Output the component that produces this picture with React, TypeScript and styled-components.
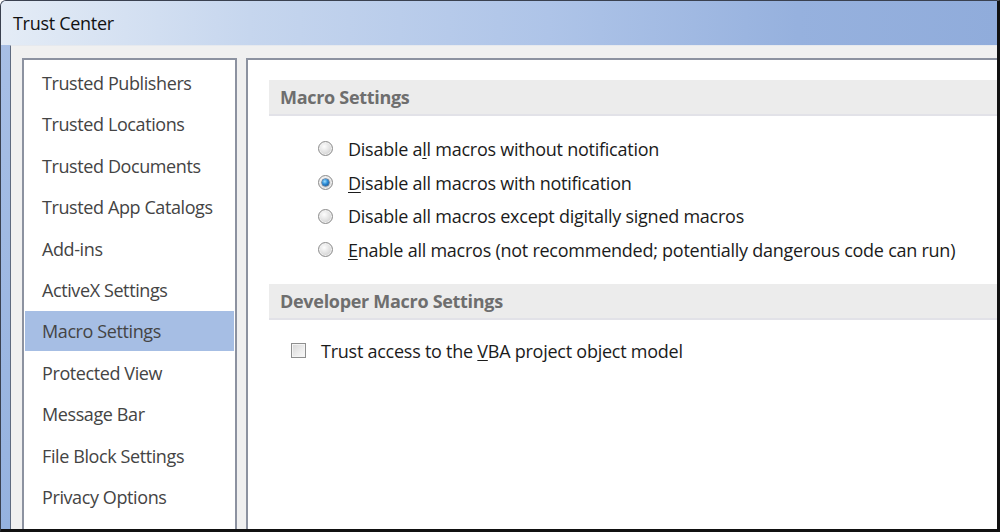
import React from 'react';
import styled, { createGlobalStyle, css } from 'styled-components';

const UI_FONT = '"Open Sans", "Noto Sans", "Liberation Sans", sans-serif';

const GlobalStyle = createGlobalStyle`
  html, body {
    margin: 0;
    padding: 0;
    background: #ffffff;
  }
  body {
    font-family: ${UI_FONT};
  }
`;

const Window = styled.div`
  width: 1000px;
  height: 532px;
  box-sizing: border-box;
  border-top: 1px solid #3a4150;
  border-left: 1px solid #3a4150;
  border-right: 3px solid #111;
  border-bottom: 3px solid #111;
  border-top-left-radius: 6px;
  display: flex;
  flex-direction: column;
  overflow: hidden;
  background: linear-gradient(180deg, #a9c0e6 0%, #95b2df 100%);
`;

const TitleBar = styled.div`
  height: 44px;
  flex: none;
  display: flex;
  align-items: center;
  padding-left: 12px;
  background: linear-gradient(90deg, #e4ecf6 0%, #c6d6ee 25%, #aec4e8 55%, #96b1de 80%, #90acdb 100%);
  font-size: 18px;
  color: #111;
  letter-spacing: -0.3px;
`;

const Body = styled.div`
  flex: 1;
  display: flex;
  min-height: 0;
  padding-left: 9px;
`;

const Client = styled.div`
  flex: 1;
  display: flex;
  gap: 9px;
  padding: 12px 0 0 11px;
  background: #f0f0f0;
  border-left: 1px solid #5f6b80;
  border-top: 1px solid #e6e9ee;
  min-height: 0;
`;

const Panel = styled.div<{ $width?: number }>`
  box-sizing: border-box;
  background: #fff;
  border: 2px solid #8c92a0;
  border-bottom: none;
  ${({ $width }) =>
    $width
      ? css`
          width: ${$width}px;
          flex: none;
        `
      : css`
          flex: 1;
          border-right: none;
        `}
`;

const NavList = styled.ul`
  list-style: none;
  margin: 0;
  padding: 3px 0 0;
`;

const NavItem = styled.li<{ $selected?: boolean }>`
  height: 40px;
  margin: 0 1px 1.4px;
  display: flex;
  align-items: center;
  padding-left: 17px;
  font-size: 18px;
  color: #444;
  letter-spacing: -0.4px;
  background: ${({ $selected }) => ($selected ? '#a6bee4' : 'transparent')};
`;

const Content = styled.div`
  padding: 20px 0 0 21px;
`;

const SectionHeader = styled.div`
  height: 34px;
  display: flex;
  align-items: center;
  padding-left: 11px;
  background: #ececec;
  border-bottom: 2px solid #e2e2e8;
  font-size: 18px;
  font-weight: 700;
  color: #6e6e6e;
  letter-spacing: -0.3px;
`;

const OptionList = styled.div<{ $indent: number; $top: number }>`
  display: flex;
  flex-direction: column;
  padding: ${({ $indent, $top }) => `${$top}px 0 17px ${$indent}px`};
`;

const OptionRow = styled.label`
  height: 33.7px;
  display: flex;
  align-items: center;
  font-size: 18px;
  color: #1b1b1b;
  letter-spacing: -0.25px;
`;

const Radio = styled.span<{ $checked?: boolean }>`
  position: relative;
  width: 15px;
  height: 15px;
  box-sizing: border-box;
  border-radius: 50%;
  border: 1px solid #8c8c8c;
  background: radial-gradient(circle at 40% 35%, #fdfdfd 0%, #e4e4e4 45%, #c4c4c4 100%);
  box-shadow: inset 0 0 0 1px #f2f2f2;
  margin: 0 15px 0 -1px;
  flex: none;

  &::after {
    content: '';
    display: ${({ $checked }) => ($checked ? 'block' : 'none')};
    position: absolute;
    left: 3px;
    top: 3px;
    width: 7px;
    height: 7px;
    border-radius: 50%;
    background: radial-gradient(circle at 40% 35%, #9fe0ff 0%, #2a8ad6 45%, #0e3f75 100%);
    box-shadow: 0 0 0 0.5px #1f3f66;
  }
`;

const Checkbox = styled.span`
  width: 15px;
  height: 15px;
  box-sizing: border-box;
  border: 1px solid #8e8f8f;
  background: linear-gradient(135deg, #d6d6d6 0%, #ededed 60%, #f9f9f9 100%);
  box-shadow: inset 0 0 0 1px #f4f4f4;
  margin-right: 15px;
  flex: none;
`;

const Key = styled.span`
  text-decoration: underline;
  text-underline-offset: 2px;
`;

const navItems = [
  'Trusted Publishers',
  'Trusted Locations',
  'Trusted Documents',
  'Trusted App Catalogs',
  'Add-ins',
  'ActiveX Settings',
  'Macro Settings',
  'Protected View',
  'Message Bar',
  'File Block Settings',
  'Privacy Options',
];

export default function App() {
  return (
    <>
      <GlobalStyle />
      <Window>
        <TitleBar>Trust Center</TitleBar>
        <Body>
          <Client>
            <Panel $width={215}>
              <NavList>
                {navItems.map((item) => (
                  <NavItem key={item} $selected={item === 'Macro Settings'}>
                    {item}
                  </NavItem>
                ))}
              </NavList>
            </Panel>
            <Panel>
              <Content>
                <SectionHeader>Macro Settings</SectionHeader>
                <OptionList $indent={50} $top={16}>
                  <OptionRow>
                    <Radio />
                    <span>
                      Disable a<Key>l</Key>l macros without notification
                    </span>
                  </OptionRow>
                  <OptionRow>
                    <Radio $checked />
                    <span>
                      <Key>D</Key>isable all macros with notification
                    </span>
                  </OptionRow>
                  <OptionRow>
                    <Radio />
                    <span>
                      Disable all macros except di<Key>g</Key>itally signed macros
                    </span>
                  </OptionRow>
                  <OptionRow>
                    <Radio />
                    <span>
                      <Key>E</Key>nable all macros (not recommended; potentially dangerous code can run)
                    </span>
                  </OptionRow>
                </OptionList>
                <SectionHeader>Developer Macro Settings</SectionHeader>
                <OptionList $indent={22} $top={14}>
                  <OptionRow>
                    <Checkbox />
                    <span>
                      Trust access to the <Key>V</Key>BA project object model
                    </span>
                  </OptionRow>
                </OptionList>
              </Content>
            </Panel>
          </Client>
        </Body>
      </Window>
    </>
  );
}
